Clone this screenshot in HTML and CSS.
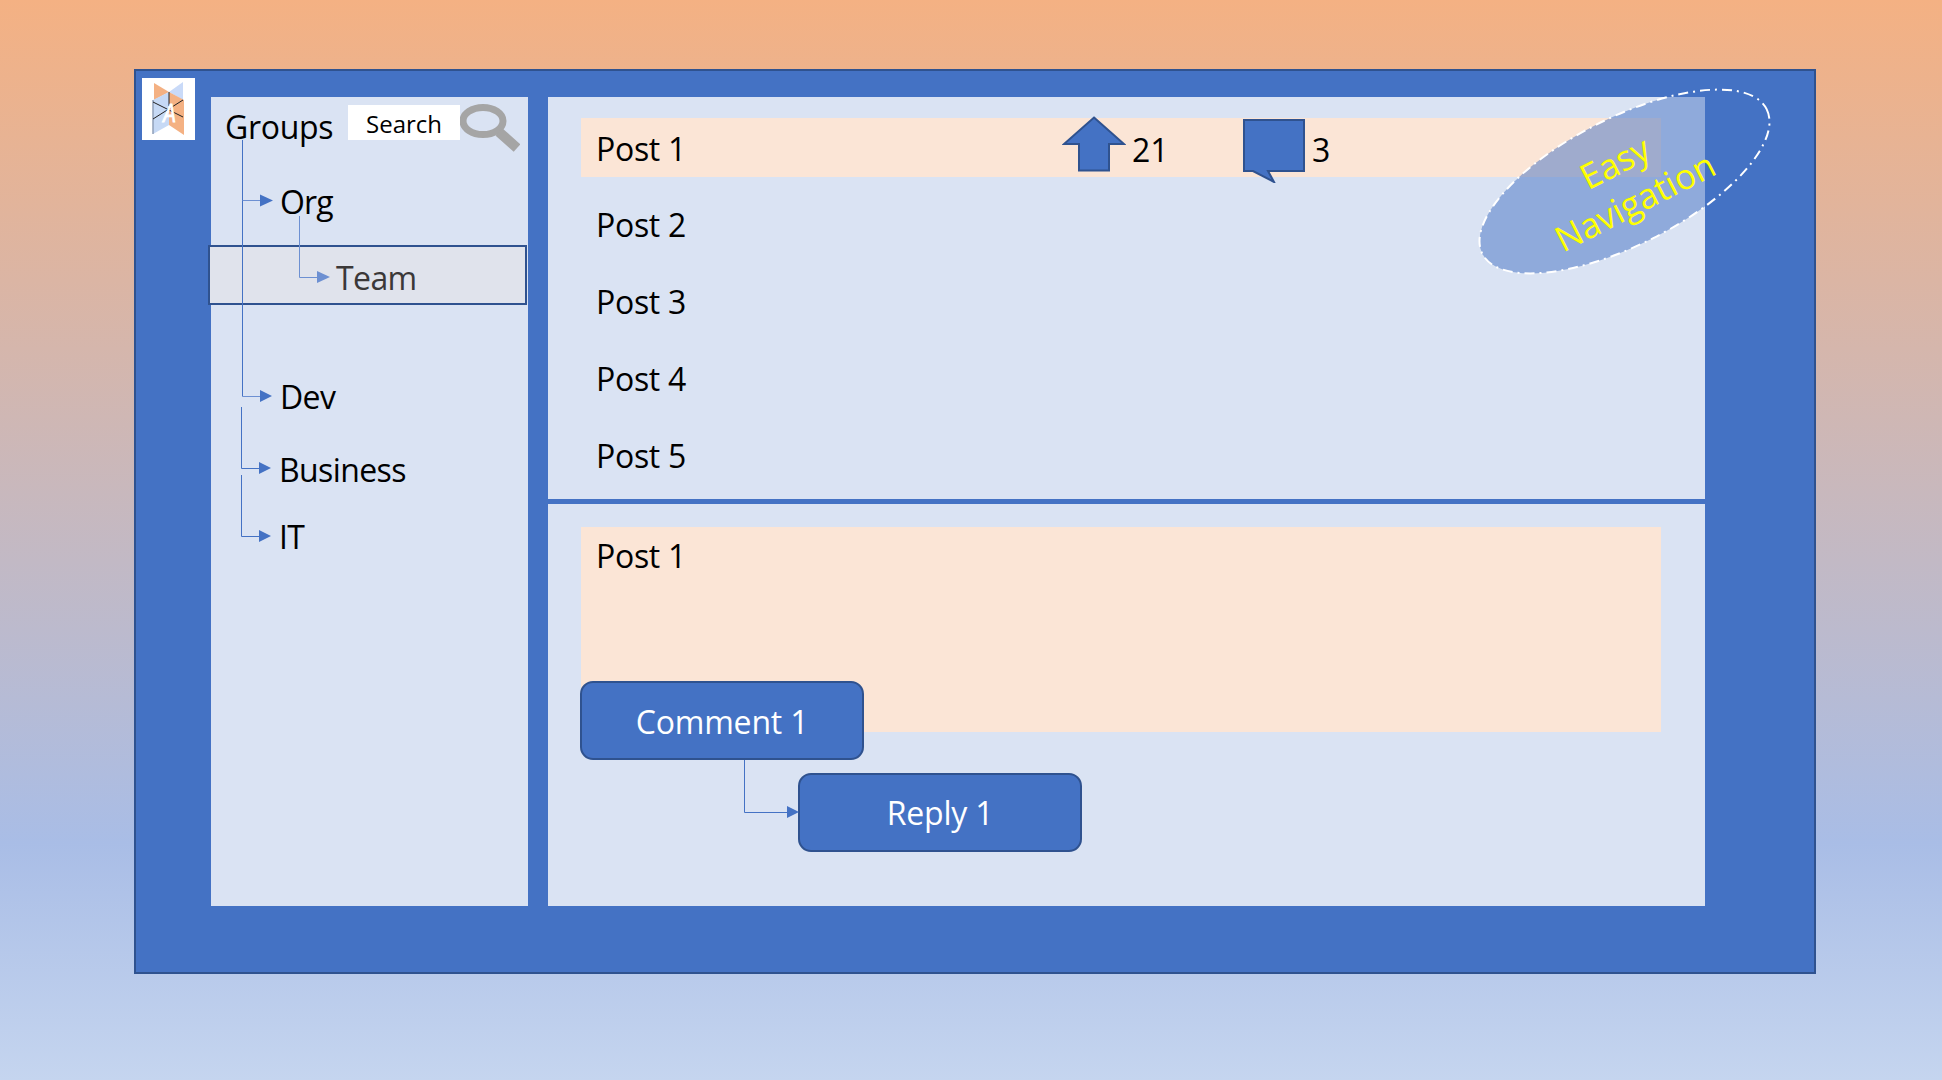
FILE: index.html
```html
<!DOCTYPE html>
<html lang="en">
<head>
<meta charset="utf-8">
<title>Easy Navigation</title>
<link rel="stylesheet" href="styles.css">
</head>
<body>
<div class="frame">
  <div class="logo">
    <svg viewBox="0 0 53 62" width="53" height="62">
      <polygon points="12,5 27,14 12,22" fill="#f4b183"/>
      <polygon points="41,4 27,14 41,22" fill="#c9daf8"/>
      <polygon points="11,22 27,14 27,47 11,56" fill="#c6d9f5"/>
      <polygon points="27,14 42,22 42,57 27,47" fill="#f4b183"/>
      <path d="M11 22V56" stroke="#8f9fb8" stroke-width="1.5" fill="none"/>
      <path d="M11 24L41 39M11 41L41 22M27 14V28" stroke="#222" stroke-width="1" fill="none"/>
      <text x="21" y="44" textLength="13" lengthAdjust="spacingAndGlyphs" class="logo-a">A</text>
    </svg>
  </div>

  <aside class="sidebar">
    <div class="side-head">
      <span class="groups">Groups</span>
      <div class="search">Search</div>
      <svg class="magnifier" viewBox="0 0 60 48" width="60" height="48">
        <ellipse cx="23" cy="17" rx="20" ry="13.5" fill="none" stroke="#a5a5a5" stroke-width="7"/>
        <path d="M39 28L57 44" stroke="#a5a5a5" stroke-width="10" fill="none"/>
      </svg>
    </div>
    <ul class="tree">
      <li class="node node-org">Org</li>
      <li class="node node-team">Team</li>
      <li class="node node-dev">Dev</li>
      <li class="node node-business">Business</li>
      <li class="node node-it">IT</li>
    </ul>
    <svg class="wires" viewBox="211 97 317 809" width="317" height="809">
      <path d="M242.500 140V396.500" class="wire"/>
      <path d="M242.500 200.500H262" class="wire soft"/>
      <polygon points="260,194.500 273,200.500 260,206.500" class="head"/>
      <path d="M299.500 216V277.500H319" class="wire soft"/>
      <polygon points="317,271 330,277 317,283" class="head pale"/>
      <path d="M242.500 396.500H262" class="wire soft"/>
      <polygon points="260,390 272,396 260,402" class="head"/>
      <path d="M241.500 407V468.500H260" class="wire"/>
      <polygon points="259,462 271,468 259,474" class="head"/>
      <path d="M241.500 475V536.500H260" class="wire"/>
      <polygon points="259,530 271,536 259,542" class="head"/>
    </svg>
  </aside>

  <main class="content">
    <section class="posts">
      <div class="post post-active">
        <span class="post-title">Post 1</span>
        <svg class="vote" viewBox="0 0 64 56" width="64" height="56">
          <polygon points="32,1.500 62,28 47,28 47,54.500 17,54.500 17,28 2,28" class="shape"/>
        </svg>
        <span class="count count-votes">21</span>
        <svg class="bubble" viewBox="0 0 63 65" width="63" height="65">
          <polygon points="2,2 62,2 62,53 26,53 32,64 11,53 2,53" class="shape"/>
        </svg>
        <span class="count">3</span>
      </div>
      <div class="post">Post 2</div>
      <div class="post">Post 3</div>
      <div class="post">Post 4</div>
      <div class="post">Post 5</div>
    </section>
    <section class="thread">
      <div class="detail">Post 1</div>
      <div class="card comment">Comment 1</div>
      <div class="card reply">Reply 1</div>
    </section>
    <svg class="wires" viewBox="548 97 1157 809" width="1157" height="809">
      <path d="M744.500 760V812.500H789" class="wire"/>
      <polygon points="787,806 799,812 787,818" class="head"/>
    </svg>
  </main>

  <div class="callout">
    <svg class="callout-shape" viewBox="0 0 323 131" width="323" height="131">
      <ellipse cx="161.500" cy="65.500" rx="159.500" ry="63.500"/>
    </svg>
    <p class="callout-text">Easy<br>Navigation</p>
  </div>
</div>
</body>
</html>
```
FILE: styles.css
```css
* { box-sizing: border-box; }
html, body { margin: 0; }
body {
  width: 1942px;
  height: 1080px;
  padding: 69px 0 0 134px;
  overflow: hidden;
  background: linear-gradient(180deg, #f4b183 0%, #a9bde6 78%, #c5d5ef 100%);
  font-family: "Open Sans", "Noto Sans", "Liberation Sans", sans-serif;
  color: #000;
}
.frame {
  position: relative;
  display: flex;
  align-items: flex-start;
  width: 1682px;
  height: 905px;
  padding: 7px 0 0 6px;
  background: #4472c4;
  border: 2px solid #2f528f;
}
.logo {
  flex: none;
  width: 53px;
  height: 62px;
  background: #fff;
}
.logo svg { display: block; }
.logo-a {
  font: italic 400 26px "Liberation Sans", sans-serif;
  fill: #fff;
  stroke: #fff;
  stroke-width: 0.8;
}
.sidebar {
  position: relative;
  flex: none;
  width: 317px;
  height: 809px;
  margin: 19px 0 0 16px;
  background: #dae3f3;
}
.side-head {
  display: flex;
  align-items: flex-start;
  padding: 8px 0 0 14px;
}
.groups {
  flex: none;
  width: 123px;
  height: 44px;
  font-size: 32px;
  line-height: 44px;
  letter-spacing: -0.3px;
}
.search {
  flex: none;
  width: 112px;
  height: 35px;
  background: #fff;
  font-size: 24px;
  line-height: 37px;
  text-align: center;
}
.magnifier {
  display: block;
  flex: none;
  margin-top: -1px;
}
.tree {
  margin: 0;
  padding: 0;
  list-style: none;
}
.node {
  font-size: 32px;
  letter-spacing: -0.6px;
  height: 50px;
  line-height: 50px;
}
.node-org { margin-top: 25px; padding-left: 69px; letter-spacing: -0.9px; }
.node-team {
  height: 60px;
  line-height: 54px;
  margin: 18px 1px 0 -3px;
  padding: 4px 0 0 126px;
  background: #e0e3ec;
  border: 2px solid #2f528f;
  color: #3b3838;
}
.node-dev { margin-top: 67px; padding-left: 69px; }
.node-business { margin-top: 23px; padding-left: 68px; }
.node-it { margin-top: 17px; padding-left: 68px; }
.wires {
  position: absolute;
  top: 0;
  left: 0;
  pointer-events: none;
}
.wire { fill: none; stroke: #4472c4; stroke-width: 1; }
.wire.soft { stroke: #6d90d2; }
.head { fill: #4472c4; }
.head.pale { fill: #6d90d2; }
.content {
  position: relative;
  flex: none;
  width: 1157px;
  height: 809px;
  margin: 19px 0 0 20px;
  background: #dae3f3;
}
.posts {
  height: 402px;
  padding: 21px 44px 0 33px;
}
.post {
  display: flex;
  align-items: center;
  height: 59px;
  margin-bottom: 18px;
  padding-left: 15px;
  font-size: 32px;
  letter-spacing: -0.3px;
}
.post-active { padding-top: 2px; background: #fbe5d6; }
.post-title { flex: none; width: 466px; }
.vote {
  display: block;
  flex: none;
  margin: -9px 0 0 0;
}
.count { flex: none; margin-top: 2px; letter-spacing: 0; }
.count-votes { width: 110px; margin-left: 6px; }
.bubble {
  display: block;
  flex: none;
  margin: 4px 7px 0 0;
}
.shape { fill: #4472c4; stroke: #2f528f; stroke-width: 2; }
.thread {
  height: 407px;
  padding: 23px 44px 0 33px;
  border-top: 5px solid #4472c4;
}
.detail {
  height: 205px;
  padding: 4px 0 0 15px;
  background: #fbe5d6;
  font-size: 32px;
  line-height: 50px;
  letter-spacing: -0.3px;
}
.card {
  position: relative;
  width: 284px;
  height: 79px;
  background: #4472c4;
  border: 2px solid #2f528f;
  border-radius: 13px;
  color: #fff;
  font-size: 32px;
  line-height: 75px;
  letter-spacing: -0.2px;
  text-align: center;
}
.comment { margin: -51px 0 0 -1px; line-height: 78px; }
.reply { margin: 13px 0 0 217px; }
.callout {
  position: absolute;
  left: 1326.500px;
  top: 44.500px;
  width: 323px;
  height: 131px;
  transform: rotate(-27deg);
  display: flex;
  align-items: center;
  justify-content: center;
}
.callout-shape {
  position: absolute;
  top: 0;
  left: 0;
  overflow: visible;
}
.callout-shape ellipse {
  fill: rgba(68, 114, 196, 0.5);
  stroke: #fff;
  stroke-width: 2;
  stroke-dasharray: 10 5 2 5;
}
.callout-text {
  position: relative;
  margin: 0;
  color: #ff0;
  font-size: 35px;
  line-height: 44px;
  letter-spacing: 0;
  text-align: center;
}
```
